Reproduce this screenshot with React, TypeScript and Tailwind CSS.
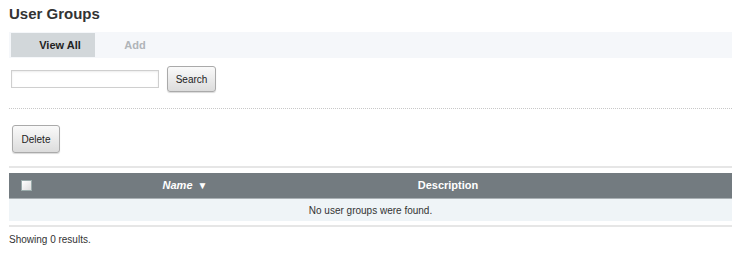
export default function App() {
  return (
    <div className="w-[736px] h-[267px] bg-white text-[#333] font-['Liberation_Sans',Arial,sans-serif] pl-[9px] pr-[4px] pt-[5px] relative">
      <h1 className="text-[15px] font-bold leading-[18px] text-[#333]">User Groups</h1>

      {/* tabs */}
      <div className="mt-[9px] h-[26px] bg-[#f5f7fa] flex items-stretch pt-px pb-px">
        <div className="ml-[2px] w-[84px] bg-[#d2d7da] flex items-center justify-center pl-[14px] text-[11px] font-bold text-[#222]">
          View All
        </div>
        <div className="w-[78px] flex items-center justify-center pl-[2px] text-[11px] font-bold text-[#b0b4b8]">
          Add
        </div>
      </div>

      {/* search */}
      <div className="mt-[8px] flex items-center ml-[2px]">
        <input
          type="text"
          className="w-[148px] h-[18px] border border-[#cfcfcf] bg-white shadow-[inset_0_1px_2px_rgba(0,0,0,0.08)] outline-none"
        />
        <button className="ml-[8px] w-[49px] h-[26px] rounded-[3px] border border-[#aaa] bg-gradient-to-b from-[#fafafa] to-[#dcdcdc] text-[10px] text-[#222] shadow-[0_1px_1px_rgba(0,0,0,0.15)]">
          Search
        </button>
      </div>

      <div className="mt-[16px] border-t border-dotted border-[#c8c8c8]" />

      <div className="mt-[16px] ml-[3px]">
        <button className="w-[48px] h-[28px] rounded-[3px] border border-[#aaa] bg-gradient-to-b from-[#fafafa] to-[#dcdcdc] text-[10px] text-[#222] shadow-[0_1px_1px_rgba(0,0,0,0.15)]">
          Delete
        </button>
      </div>

      <div className="mt-[13px] h-[2px] bg-[#e6e6e6]" />

      {/* table */}
      <div className="mt-[5px]">
        <div className="h-[26px] bg-[#737b80] border-b border-[#a9b0b4] flex items-center text-[11px] font-bold text-white">
          <div className="w-[31px] flex items-center justify-center">
            <span className="w-[11px] h-[11px] ml-[3px] border border-[#9aa] bg-gradient-to-br from-white to-[#dedede]" />
          </div>
          <div className="w-[290px] flex items-center justify-center italic">
            Name <span className="ml-[5px] not-italic text-[10px]">▼</span>
          </div>
          <div className="w-[236px] text-center">Description</div>
        </div>
        <div className="h-[22px] bg-[#eff4f7] flex items-center justify-center text-[10px] text-[#333]">
          No user groups were found.
        </div>
      </div>

      <div className="mt-[4px] h-[2px] bg-[#e6e6e6]" />

      <div className="mt-[5px] text-[10px] text-[#333]">Showing 0 results.</div>
    </div>
  );
}
